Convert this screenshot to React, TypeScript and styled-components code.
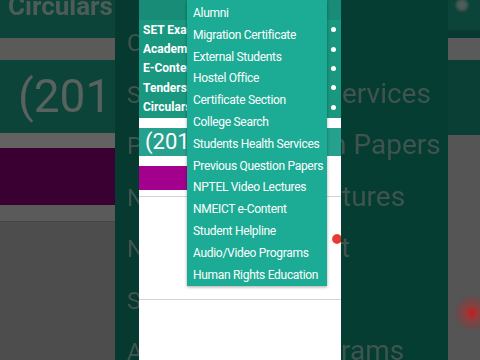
import React from "react";
import styled, { createGlobalStyle } from "styled-components";

const Global = createGlobalStyle`
  html, body { margin: 0; padding: 0; background: #063c32; }
  body { width: 480px; height: 360px; overflow: hidden; font-family: Roboto, "Liberation Sans", sans-serif; }
`;

const Frame = styled.div`
  display: flex;
  width: 480px;
  height: 360px;
  overflow: hidden;
`;

const Side = styled.div`
  width: 139px;
  height: 360px;
  display: flex;
  flex-shrink: 0;
  overflow: hidden;
`;

const Column = styled.div<{ $w: number; $bg?: string }>`
  width: ${(p) => p.$w}px;
  flex-shrink: 0;
  display: flex;
  flex-direction: column;
  background: ${(p) => p.$bg || "transparent"};
  overflow: hidden;
`;

const Band = styled.div<{ $h: number; $bg: string }>`
  height: ${(p) => p.$h}px;
  flex-shrink: 0;
  background: ${(p) => p.$bg};
  overflow: hidden;
  display: flex;
  flex-direction: column;
`;

const GhostTitle = styled.div`
  margin: -7px 0 0 8px;
  font-size: 26px;
  line-height: 26px;
  font-weight: 700;
  color: #4c5d58;
  white-space: nowrap;
  filter: blur(0.5px);
`;

const GhostYear = styled.div`
  margin: 13px 0 0 18px;
  font-size: 46px;
  line-height: 46px;
  color: #58625f;
  white-space: nowrap;
  filter: blur(0.6px);
`;

const ZoomRows = styled.div<{ $top: number }>`
  display: flex;
  flex-direction: column;
  padding-top: ${(p) => p.$top}px;
`;

const ZoomRow = styled.div<{ $size: number; $indent: number }>`
  height: 51.5px;
  line-height: 51.5px;
  font-size: ${(p) => p.$size}px;
  text-indent: ${(p) => p.$indent}px;
  color: #3f544e;
  white-space: nowrap;
  filter: blur(0.5px);
`;

const Blob = styled.div<{ $size: number; $color: string; $mt: number; $ml: number }>`
  width: ${(p) => p.$size}px;
  height: ${(p) => p.$size}px;
  margin: ${(p) => p.$mt}px 0 0 ${(p) => p.$ml}px;
  border-radius: 50%;
  background: ${(p) => p.$color};
  filter: blur(1.5px);
  flex-shrink: 0;
`;

const Phone = styled.div`
  width: 202px;
  height: 360px;
  flex-shrink: 0;
  position: relative;
  overflow: hidden;
  background: #ffffff;
  display: flex;
  flex-direction: column;
`;

const TopMenu = styled.div`
  height: 118px;
  flex-shrink: 0;
  background: #1a977f;
  display: flex;
  flex-direction: column;
`;

const Header = styled.div`
  height: 20px;
  flex-shrink: 0;
  background: #188c77;
`;

const MenuRow = styled.div`
  height: 19.4px;
  flex-shrink: 0;
  display: flex;
  align-items: center;
  justify-content: space-between;
  padding: 0 5px 0 4px;
  color: #ffffff;
  font-size: 12px;
  font-weight: 700;
  white-space: nowrap;
`;

const Bullet = styled.span`
  width: 5px;
  height: 5px;
  border-radius: 50%;
  background: #ffffff;
  flex-shrink: 0;
`;

const Gap = styled.div<{ $h: number }>`
  height: ${(p) => p.$h}px;
  flex-shrink: 0;
`;

const YearBar = styled.div`
  height: 28px;
  flex-shrink: 0;
  background: #25a18e;
  color: #ffffff;
  font-size: 22px;
  line-height: 28px;
  padding-left: 6px;
  white-space: nowrap;
`;

const Ribbon = styled.div`
  height: 24px;
  width: 150px;
  flex-shrink: 0;
  background: #a3008e;
`;

const Divider = styled.div`
  height: 1px;
  flex-shrink: 0;
  background: #d4d4d4;
`;

const Dropdown = styled.ul`
  position: absolute;
  top: 0;
  left: 48px;
  width: 140px;
  margin: 0;
  padding: 3px 0 0;
  list-style: none;
  background: #1cab95;
  box-shadow: 0 1px 3px rgba(0, 0, 0, 0.35);
`;

const DropItem = styled.li`
  height: 21.8px;
  line-height: 21.8px;
  padding-left: 6px;
  color: #ffffff;
  font-size: 12px;
  letter-spacing: -0.3px;
  white-space: nowrap;
`;

const Fab = styled.div`
  position: absolute;
  left: 193px;
  top: 234px;
  width: 10px;
  height: 10px;
  border-radius: 50%;
  background: radial-gradient(circle, #ef3b33 0%, #e53935 55%, rgba(229, 57, 53, 0.4) 100%);
`;

const RedGlow = styled.div`
  width: 34px;
  height: 34px;
  margin: 161px 0 0 7px;
  border-radius: 50%;
  background: radial-gradient(circle, #c01a1a 0%, #b02c2c 12%, rgba(140, 62, 62, 0.8) 35%, rgba(105, 72, 72, 0.55) 70%, rgba(85, 85, 85, 0) 100%);
`;

const menu = ["SET Exam", "Academic", "E-Content", "Tenders", "Circulars"];

const items = [
  "Alumni",
  "Migration Certificate",
  "External Students",
  "Hostel Office",
  "Certificate Section",
  "College Search",
  "Students Health Services",
  "Previous Question Papers",
  "NPTEL Video Lectures",
  "NMEICT e-Content",
  "Student Helpline",
  "Audio/Video Programs",
  "Human Rights Education",
];

const stripLetters = ["C", "S", "P", "N", "N", "S", "A"];
const rightEnds: { t: string; i: number }[] = [
  { t: "", i: 0 },
  { t: "ervices", i: 1 },
  { t: "n Papers", i: -10 },
  { t: "tures", i: 1 },
  { t: "t", i: 0 },
  { t: "", i: 0 },
  { t: "rams", i: 0 },
];

export default function App() {
  return (
    <>
      <Global />
      <Frame>
        <Side>
          <Column $w={115}>
            <Band $h={38} $bg="#0d443a">
              <GhostTitle>Circulars</GhostTitle>
            </Band>
            <Band $h={22} $bg="#5a5a58" />
            <Band $h={73} $bg="#0d443a">
              <GhostYear>(201</GhostYear>
            </Band>
            <Band $h={15} $bg="#626262" />
            <Band $h={57} $bg="#3a0031" />
            <Band $h={16} $bg="#5a5a5a" />
            <Band $h={1} $bg="#454545" />
            <Band $h={138} $bg="#4d4d4d" />
          </Column>
          <Column $w={24} $bg="#063a30">
            <ZoomRows $top={18}>
              {stripLetters.map((l, i) => (
                <ZoomRow key={i} $size={24} $indent={12}>
                  {l}
                </ZoomRow>
              ))}
            </ZoomRows>
          </Column>
        </Side>

        <Phone>
          <TopMenu>
            <Header />
            {menu.map((m) => (
              <MenuRow key={m}>
                <span>{m}</span>
                <Bullet />
              </MenuRow>
            ))}
          </TopMenu>
          <Gap $h={10} />
          <YearBar>(2019)</YearBar>
          <Gap $h={10} />
          <Ribbon />
          <Gap $h={6} />
          <Divider />
          <Gap $h={102} />
          <Divider />
          <Dropdown>
            {items.map((it) => (
              <DropItem key={it}>{it}</DropItem>
            ))}
          </Dropdown>
          <Fab />
        </Phone>

        <Side>
          <Column $w={107} $bg="#053d33">
            <ZoomRows $top={16}>
              {rightEnds.map((r, i) => (
                <ZoomRow key={i} $size={28} $indent={r.i}>
                  {r.t}
                </ZoomRow>
              ))}
            </ZoomRows>
          </Column>
          <Column $w={32}>
            <Band $h={30} $bg="#0c4439">
              <Blob $size={12} $color="#4f5c58" $mt={-1} $ml={8} />
            </Band>
            <Band $h={8} $bg="#083a31" />
            <Band $h={22} $bg="#5a5a5a" />
            <Band $h={75} $bg="#0a3f35" />
            <Band $h={225} $bg="#555555">
              <RedGlow />
            </Band>
          </Column>
        </Side>
      </Frame>
    </>
  );
}
